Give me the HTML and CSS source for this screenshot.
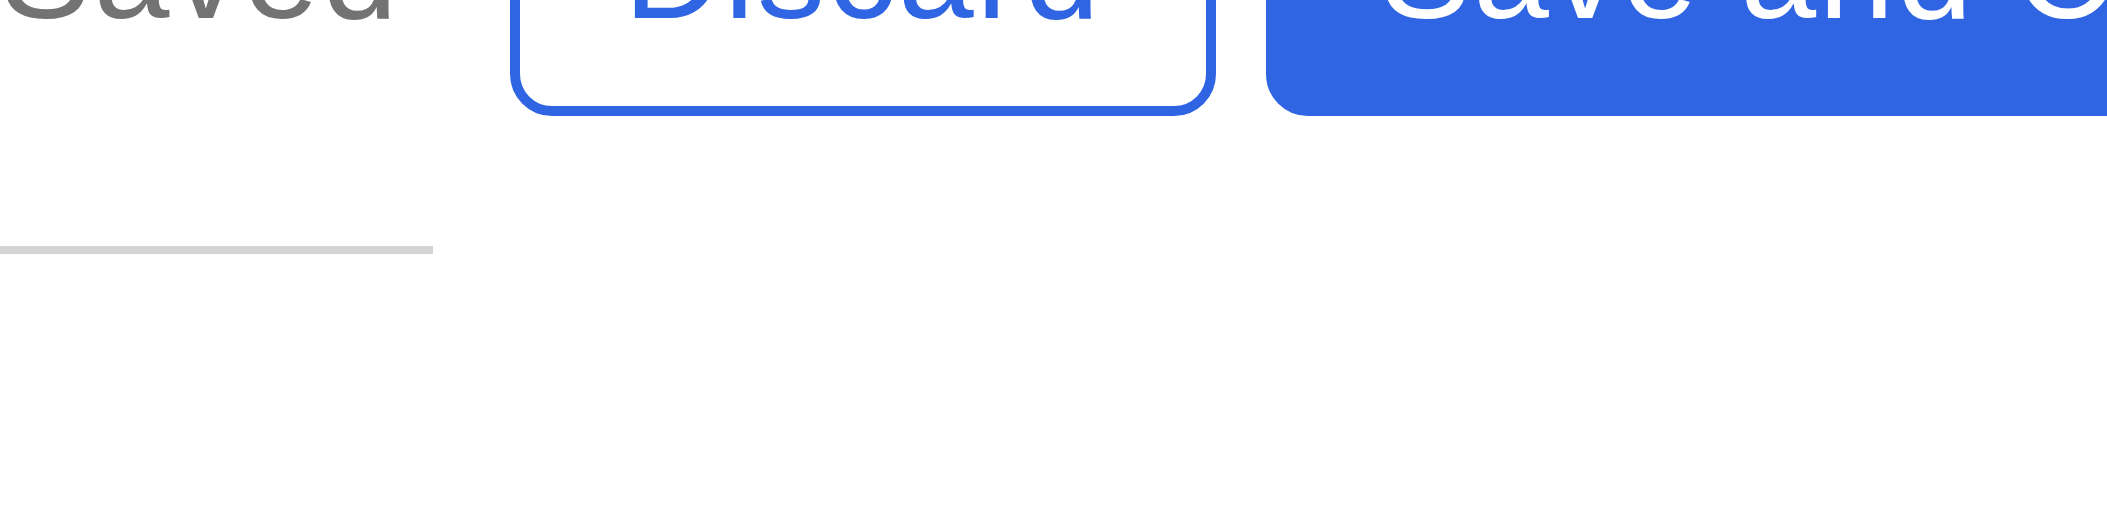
FILE: index.html
```html
<!DOCTYPE html>
<html lang="en">
<head>
<meta charset="utf-8">
<title>Save bar</title>
<link rel="stylesheet" href="styles.css">
</head>
<body>
<div class="page">
  <div class="actions">
    <span class="status">Saved</span>
    <button class="btn btn-outline" type="button">Discard</button>
    <button class="btn btn-primary" type="button">Save and Continue</button>
  </div>
  <div class="divider"></div>
</div>
</body>
</html>
```

FILE: styles.css
```css
html, body {
  margin: 0;
  padding: 0;
  background: #ffffff;
  overflow: hidden;
}

.page {
  width: 2107px;
  height: 516px;
  overflow: hidden;
  font-family: "Liberation Sans", Arial, sans-serif;
}

.actions {
  display: flex;
  align-items: baseline;
  gap: 50px;
  margin-top: -174px;
  white-space: nowrap;
}

.status {
  font-size: 136px;
  line-height: 170px;
  letter-spacing: 3px;
  color: #737373;
  margin-right: 59px;
}

.btn {
  font-family: inherit;
  font-size: 136px;
  line-height: 170px;
  letter-spacing: 2.5px;
  padding: 50px 104px;
  border: 10px solid #2f65e3;
  border-radius: 42px;
  margin: 0;
  flex: none;
}

.btn-outline {
  background: #ffffff;
  color: #2f65e3;
}

.btn-primary {
  background: #2f65e3;
  color: #ffffff;
}

.divider {
  width: 433px;
  height: 8px;
  margin-top: 130px;
  background: #d4d4d4;
}
```
